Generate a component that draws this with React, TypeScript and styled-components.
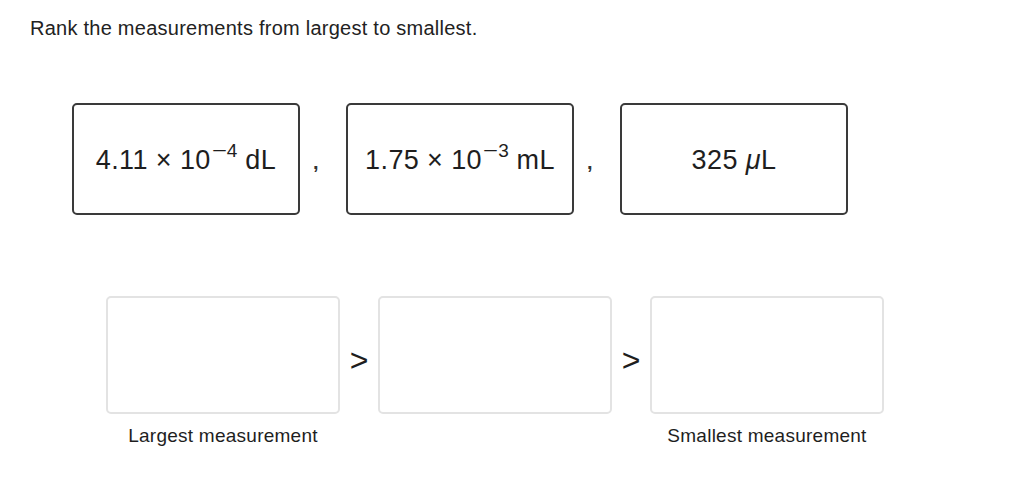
import styled, { createGlobalStyle } from 'styled-components';

const GlobalStyle = createGlobalStyle`
  body {
    margin: 0;
    background: #fff;
    font-family: "Liberation Sans", Arial, Helvetica, sans-serif;
    color: #222;
  }
`;

type Measurement = {
  value: string;
  power?: string;
  unit: string;
  italicPrefix?: string;
};

const measurements: Measurement[] = [
  { value: '4.11 × 10', power: '4', unit: 'dL' },
  { value: '1.75 × 10', power: '3', unit: 'mL' },
  { value: '325', italicPrefix: 'μ', unit: 'L' },
];

const slots = [
  { label: 'Largest measurement' },
  { label: '' },
  { label: 'Smallest measurement' },
];

export default function App() {
  return (
    <>
      <GlobalStyle />
      <Page>
        <Prompt>Rank the measurements from largest to smallest.</Prompt>

        <CardRow>
          {measurements.map((m, i) => (
            <CardGroup key={i}>
              <Card>
                <Value>
                  {m.value}
                  {m.power && (
                    <Power>
                      <Minus>−</Minus>
                      {m.power}
                    </Power>
                  )}{' '}
                  {m.italicPrefix && <Greek>{m.italicPrefix}</Greek>}
                  {m.unit}
                </Value>
              </Card>
              {i < measurements.length - 1 && <Comma>,</Comma>}
            </CardGroup>
          ))}
        </CardRow>

        <SlotRow>
          {slots.map((s, i) => (
            <SlotGroup key={i}>
              <SlotColumn>
                <Slot />
                <SlotLabel>{s.label}</SlotLabel>
              </SlotColumn>
              {i < slots.length - 1 && <GreaterThan>&gt;</GreaterThan>}
            </SlotGroup>
          ))}
        </SlotRow>
      </Page>
    </>
  );
}

const Page = styled.div`
  width: 1024px;
  height: 502px;
  box-sizing: border-box;
  padding-top: 16px;
`;

const Prompt = styled.p`
  margin: 0 0 0 30px;
  font-size: 20px;
  line-height: 24px;
  letter-spacing: 0.25px;
  color: #222;
`;

const CardRow = styled.div`
  display: flex;
  align-items: center;
  margin: 63px 0 0 72px;
`;

const CardGroup = styled.div`
  display: flex;
  align-items: center;
`;

const Card = styled.div`
  width: 228px;
  height: 112px;
  box-sizing: border-box;
  border: 2px solid #3a3a3a;
  border-radius: 5px;
  display: flex;
  align-items: center;
  justify-content: center;
  padding-top: 2px;
`;

const Value = styled.span`
  font-size: 27px;
  letter-spacing: 0.4px;
  color: #1e1e1e;
  white-space: nowrap;
`;

const Power = styled.span`
  font-size: 19px;
  letter-spacing: 0;
  position: relative;
  top: -12px;
  margin-left: 2px;
`;

const Minus = styled.span`
  display: inline-block;
  transform: scaleX(1.35);
  margin: 0 2px 0 1px;
`;

const Greek = styled.i`
  font-style: italic;
`;

const Comma = styled.span`
  width: 46px;
  box-sizing: border-box;
  padding-left: 13px;
  font-size: 20px;
  font-weight: bold;
  color: #333;
  position: relative;
  top: 3px;
`;

const SlotRow = styled.div`
  display: flex;
  margin: 81px 0 0 106px;
`;

const SlotGroup = styled.div`
  display: flex;
  align-items: flex-start;
`;

const SlotColumn = styled.div`
  display: flex;
  flex-direction: column;
  align-items: center;
  width: 234px;
`;

const Slot = styled.div`
  width: 234px;
  height: 118px;
  box-sizing: border-box;
  border: 2px solid #e3e3e3;
  border-radius: 5px;
`;

const SlotLabel = styled.div`
  margin-top: 11px;
  font-size: 19px;
  line-height: 22px;
  letter-spacing: 0.25px;
  color: #1e1e1e;
  white-space: nowrap;
`;

const GreaterThan = styled.span`
  width: 38px;
  height: 118px;
  display: flex;
  align-items: center;
  justify-content: center;
  padding-top: 10px;
  box-sizing: border-box;
  font-size: 32px;
  color: #1e1e1e;
`;
